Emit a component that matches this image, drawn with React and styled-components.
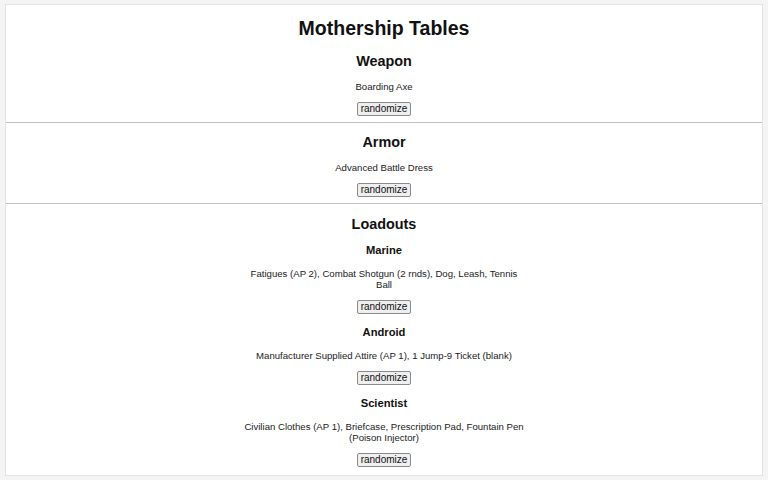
import React from 'react';
import styled, { createGlobalStyle } from 'styled-components';

const GlobalStyle = createGlobalStyle`
  html, body {
    margin: 0;
    padding: 0;
    background: #f4f4f4;
    font-family: "Liberation Sans", Arial, sans-serif;
    color: #111;
  }
`

const Card = styled.main`
  margin: 4px 5px 4px 5px;
  background: #fff;
  border: 1px solid #e2e2e2;
  padding-top: 12px;
  display: flex;
  flex-direction: column;
`

const Title = styled.h1`
  margin: 0 0 2px;
  font-size: 19.5px;
  line-height: 22px;
  font-weight: bold;
  text-align: center;
`

const Section = styled.section`
  display: flex;
  flex-direction: column;
  align-items: center;
  padding: 11.5px 0 ${props => (props.last ? '8.5px' : '6px')};
  border-bottom: ${props => (props.last ? 'none' : '1px solid #c2c2c2')};
`

const SectionTitle = styled.h2`
  margin: 0;
  font-size: 14.4px;
  line-height: 17px;
  font-weight: bold;
`

const GroupTitle = styled.h3`
  margin: ${props => (props.first ? '11px' : '12px')} 0 0;
  font-size: 11.2px;
  line-height: 13px;
  font-weight: bold;
`

const Result = styled.p`
  margin: 11px 0 0;
  max-width: 283px;
  font-size: 9.6px;
  line-height: 11px;
  text-align: center;
  color: #222;
`

const RandomButton = styled.button`
  margin-top: 10px;
  height: 14px;
  padding: 0 3px;
  font-family: "Liberation Sans", Arial, sans-serif;
  font-size: 10px;
  line-height: 12px;
  color: #111;
  background: #efefef;
  border: 1px solid #8a8a8a;
  border-radius: 2px;
`

const tables = [
  { name: 'Weapon', value: 'Boarding Axe' },
  { name: 'Armor', value: 'Advanced Battle Dress' },
]

const loadouts = [
  { name: 'Marine', value: 'Fatigues (AP 2), Combat Shotgun (2 rnds), Dog, Leash, Tennis Ball' },
  { name: 'Android', value: 'Manufacturer Supplied Attire (AP 1), 1 Jump-9 Ticket (blank)' },
  { name: 'Scientist', value: 'Civilian Clothes (AP 1), Briefcase, Prescription Pad, Fountain Pen (Poison Injector)' },
]

export default function App() {
  return (
    <>
      <GlobalStyle />
      <Card>
        <Title>Mothership Tables</Title>
        {tables.map(t => (
          <Section key={t.name}>
            <SectionTitle>{t.name}</SectionTitle>
            <Result>{t.value}</Result>
            <RandomButton type="button">randomize</RandomButton>
          </Section>
        ))}
        <Section last>
          <SectionTitle>Loadouts</SectionTitle>
          {loadouts.map((l, i) => (
            <React.Fragment key={l.name}>
              <GroupTitle first={i === 0}>{l.name}</GroupTitle>
              <Result>{l.value}</Result>
              <RandomButton type="button">randomize</RandomButton>
            </React.Fragment>
          ))}
        </Section>
      </Card>
    </>
  )
}
